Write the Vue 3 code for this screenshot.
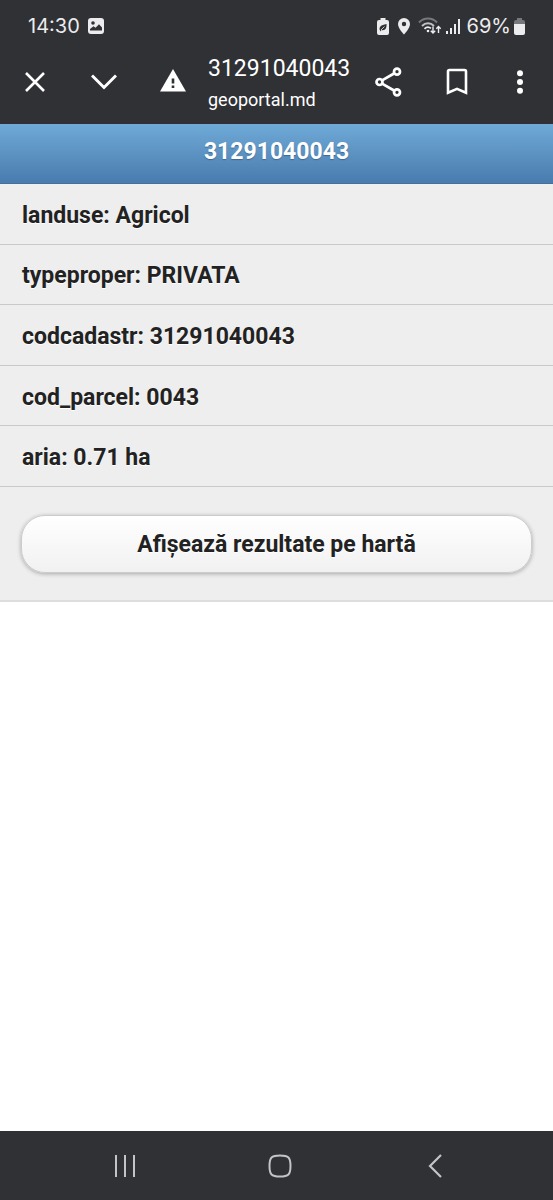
<script setup>
const title = '31291040043'
const rows = [
  ['landuse', 'Agricol'],
  ['typeproper', 'PRIVATA'],
  ['codcadastr', '31291040043'],
  ['cod_parcel', '0043'],
  ['aria', '0.71 ha'],
]
</script>

<template>
  <div class="screen">
    <header class="chrome">
      <div class="status">
        <div class="status-group">
          <span class="clock">14:30</span>
          <svg width="16" height="16" viewBox="0 0 16 16" aria-hidden="true">
            <rect width="16" height="16" rx="3" fill="#ececee" />
            <circle cx="5" cy="5" r="1.8" fill="#303135" />
            <path d="M2 12.500V11l3.500-2.800 2 1.600L11 6.300l3 3.200v3z" fill="#303135" />
          </svg>
        </div>
        <div class="status-group status-right">
          <svg class="battery-saver" width="12" height="17" viewBox="0 0 12 17" aria-hidden="true">
            <path d="M3.5 0h5v2H10a2 2 0 0 1 2 2v11a2 2 0 0 1-2 2H2a2 2 0 0 1-2-2V4a2 2 0 0 1 2-2h1.500z" fill="#ececee" />
            <path d="M3 12.500C1.500 9 4 7 9.500 6c.4 4-1.500 7-5 6l-1.500 1.500z" fill="#303135" />
            <path d="M4 12 7.500 8.500" stroke="#ececee" stroke-width=".8" />
          </svg>
          <svg class="pin" width="12" height="17" viewBox="0 0 12 17" aria-hidden="true">
            <path fill-rule="evenodd" d="M6 0a6 6 0 0 0-6 6c0 4.500 6 10.500 6 10.500S12 10.500 12 6A6 6 0 0 0 6 0zm0 3.800a2.200 2.200 0 1 1 0 4.400 2.200 2.200 0 0 1 0-4.400z" fill="#ececee" />
          </svg>
          <svg class="wifi" width="24" height="18" viewBox="0 0 24 18" fill="none" aria-hidden="true">
            <path d="M1 5.500c5-5.300 13-5.300 18 0" stroke="#77787b" stroke-width="2" />
            <path d="M4 9c3.500-3.600 8.500-3.600 12 0" stroke="#bfc0c2" stroke-width="2" />
            <path d="M6.500 11.800c2-2 4.500-2 6.500-.4" stroke="#ececee" stroke-width="1.800" />
            <circle cx="10" cy="14" r="1.300" fill="#ececee" />
            <path d="M15 9.500v6.500m-2.200-2.200 2.200 2.200 2.200-2.200M20.500 16V9.500m-2.200 2.200 2.200-2.200 2.200 2.200" stroke="#ececee" stroke-width="1.400" />
          </svg>
          <svg class="signal" width="15" height="15" viewBox="0 0 15 15" fill="#ececee" aria-hidden="true">
            <path d="M0 12h2v3H0zM4 9h2v6H4zM8 5h2v10H8zM12 0h2v15h-2z" />
          </svg>
          <span class="percent">69%</span>
          <svg class="battery" width="11" height="17" viewBox="0 0 11 17" aria-hidden="true">
            <path d="M3 0h5v2h1a2 2 0 0 1 2 2v3H0V4a2 2 0 0 1 2-2h1z" fill="#77787b" />
            <path d="M0 6h11v9a2 2 0 0 1-2 2H2a2 2 0 0 1-2-2z" fill="#ececee" />
          </svg>
        </div>
      </div>
      <div class="toolbar">
        <button class="tool" aria-label="Close">
          <svg width="22" height="22" viewBox="0 0 22 22"><path d="m2 2 18 18M20 2 2 20" fill="none" stroke="#fff" stroke-width="2.600" /></svg>
        </button>
        <button class="tool minimize" aria-label="Minimize">
          <svg width="26" height="18" viewBox="0 0 26 18"><path d="m1 2.500 12 12 12-12" fill="none" stroke="#fff" stroke-width="3" /></svg>
        </button>
        <button class="tool warn" aria-label="Site information">
          <svg width="26" height="26" viewBox="0 0 26 26"><path d="M13 0 26 22.500H0z" fill="#fff" /><path d="M11.700 9.500h2.600v5h-2.600zM11.700 16.500h2.600v2.600h-2.600z" fill="#303135" /></svg>
        </button>
        <div class="page-info">
          <div class="page-title">{{ title }}</div>
          <div class="page-host">geoportal.md</div>
        </div>
        <button class="tool share" aria-label="Share">
          <svg width="27" height="30" viewBox="0 0 27 30" fill="none" stroke="#fff" stroke-width="2.700">
            <path d="M7.500 13.200 19 6.500M7.500 16.800 19 23.500" />
            <circle cx="4.500" cy="15" r="3" /><circle cx="22" cy="4.700" r="3" /><circle cx="22" cy="25.300" r="3" />
          </svg>
        </button>
        <button class="tool bookmark" aria-label="Bookmark">
          <svg width="22" height="28" viewBox="0 0 22 28"><path d="M2 24.800V3.500Q2 2 3.500 2h15Q20 2 20 3.500v21.300l-9-4z" fill="none" stroke="#fff" stroke-width="2.600" /></svg>
        </button>
        <button class="tool more" aria-label="More options">
          <svg width="6" height="24" viewBox="0 0 6 24" fill="#fff"><circle cx="3" cy="3.200" r="3" /><circle cx="3" cy="12" r="3" /><circle cx="3" cy="20.800" r="3" /></svg>
        </button>
      </div>
    </header>

    <main>
      <h1 class="heading">{{ title }}</h1>
      <section class="result">
        <ul class="list">
          <li v-for="[name, value] in rows" :key="name">{{ name }}: {{ value }}</li>
        </ul>
        <div class="actions">
          <button class="map-button">Afișează rezultate pe hartă</button>
        </div>
      </section>
    </main>

    <nav class="navbar" aria-label="System navigation">
      <button class="nav" aria-label="Recent apps">
        <svg width="22" height="22" viewBox="0 0 22 22"><path d="M2 0v22M11 0v22M20 0v22" stroke="#c3c4c7" stroke-width="2" /></svg>
      </button>
      <button class="nav" aria-label="Home">
        <svg width="24" height="24" viewBox="0 0 24 24"><path d="M12 1.500c8.500 0 10.500 2 10.500 10.500s-2 10.500-10.500 10.500S1.500 20.500 1.500 12 3.500 1.500 12 1.500z" fill="none" stroke="#c3c4c7" stroke-width="2" /></svg>
      </button>
      <button class="nav" aria-label="Back">
        <svg width="14" height="24" viewBox="0 0 14 24"><path d="M13 1 2 12l11 11" fill="none" stroke="#c3c4c7" stroke-width="2.200" /></svg>
      </button>
    </nav>
  </div>
</template>

<style>
body {
  margin: 0;
}
</style>

<style scoped>
.screen {
  display: flex;
  flex-direction: column;
  min-height: 100vh;
  background: #fff;
  font-family: Roboto, "Liberation Sans", sans-serif;
}
button {
  border: 0;
  margin: 0;
  padding: 0;
  background: none;
  font: inherit;
}
svg {
  display: block;
  flex: none;
}
.chrome {
  background: #303135;
  color: #fff;
  padding-bottom: 12px;
}
.status {
  display: flex;
  justify-content: space-between;
  align-items: center;
  height: 52px;
  padding: 0 28px;
  font-family: Inter, Roboto, sans-serif;
  font-size: 20px;
  color: #ececee;
}
.status-group {
  display: flex;
  align-items: center;
}
.clock {
  margin-right: 8px;
}
.pin {
  margin-left: 9px;
}
.wifi {
  margin-left: 8px;
}
.signal {
  margin-left: 4px;
}
.percent {
  margin: 0 3px 0 6px;
}
.toolbar {
  display: flex;
  align-items: center;
  height: 60px;
  padding: 0 30px 0 24px;
}
.tool {
  flex: none;
  height: 48px;
  display: flex;
  align-items: center;
  cursor: pointer;
}
.minimize {
  margin-left: 45px;
}
.warn {
  margin-left: 43px;
}
.page-info {
  flex: 1;
  min-width: 0;
  margin-left: 22px;
  padding-top: 4px;
}
.page-title {
  font-size: 23px;
  line-height: 32px;
}
.page-host {
  font-size: 18px;
  line-height: 30px;
}
.bookmark {
  margin-left: 44px;
}
.more {
  margin-left: 49px;
}
main {
  flex: 1;
}
.heading {
  margin: 0;
  padding: 13px 20px 16px;
  border-bottom: 1px solid #456f9a;
  background: linear-gradient(#6faad7, #497bae);
  color: #fff;
  font-size: 23px;
  line-height: 30px;
  font-weight: 700;
  text-align: center;
  text-shadow: 0 1px 1px #3e6790;
}
.result {
  background: #eee;
  border-bottom: 2px solid #ddd;
  color: #222;
  font-size: 23px;
  font-weight: 700;
  text-shadow: 0 1px 0 #fff;
}
.list {
  display: grid;
  grid-auto-rows: 1fr;
  min-height: 303px;
  margin: 0;
  padding: 0;
  list-style: none;
}
.list li {
  display: flex;
  align-items: center;
  padding: 3px 22px 0;
  border-bottom: 1px solid #c9c9c9;
}
.actions {
  padding: 28px 21px 27px;
}
.map-button {
  width: 100%;
  min-height: 58px;
  border: 1px solid #ccc;
  border-radius: 24px;
  background: linear-gradient(#fff, #f1f1f1);
  box-shadow: 0 1px 4px rgba(0, 0, 0, 0.3);
  color: #222;
  text-shadow: 0 1px 0 #fff;
  cursor: pointer;
}
.navbar {
  display: grid;
  grid-template-columns: repeat(3, 1fr);
  align-items: center;
  height: 69px;
  padding: 0 41px 0 47px;
  background: #303135;
}
.nav {
  display: flex;
  align-items: center;
  justify-content: center;
  height: 48px;
  cursor: pointer;
}
</style>
